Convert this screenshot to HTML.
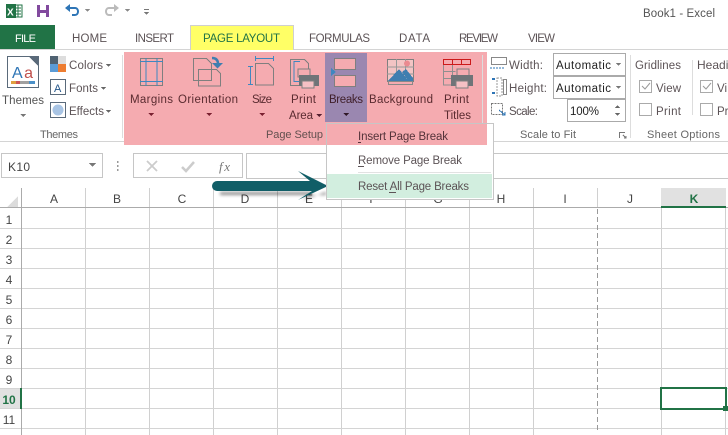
<!DOCTYPE html>
<html><head><meta charset="utf-8"><style>
html,body{margin:0;padding:0;background:#fff;width:728px;height:435px;overflow:hidden}
svg{display:block;position:absolute;left:0;top:0}
text{font-family:"Liberation Sans",sans-serif;font-size:11.500px;fill:#444}
.r{fill:#5c5356}.c{text-anchor:middle;font-size:12px;fill:#444}
</style></head><body>
<svg width="728" height="435" viewBox="0 0 728 435" xmlns="http://www.w3.org/2000/svg" shape-rendering="crispEdges">
<defs><filter id="b" x="-10%" y="-100%" width="120%" height="300%"><feGaussianBlur stdDeviation="1.500"/></filter></defs>
<rect width="728" height="435" fill="#fff"/>
<!-- QAT -->
<rect x="12" y="5" width="10" height="12" fill="#fff" stroke="#217346"/><path d="M15 8h6M15 11h6M15 14h6M18 5v12" stroke="#217346"/><rect x="6" y="4" width="10" height="14" fill="#217346"/><text x="7" y="15.500" style="font-size:10px;font-weight:bold;fill:#fff">X</text>
<rect x="37" y="5" width="12" height="12" fill="#824a9e"/><rect x="40" y="5" width="6" height="5" fill="#fff"/><rect x="40" y="13" width="6" height="4" fill="#fff"/>
<g shape-rendering="auto"><path d="M67 8h8c4 0 4 7 0 7h-3" fill="none" stroke="#2e75b6" stroke-width="2"/><path d="M65 8l5-4v8z" fill="#2e75b6"/>
<path d="M117 8h-8c-4 0-4 7 0 7h3" fill="none" stroke="#bbb" stroke-width="2"/><path d="M119 8l-5-4v8z" fill="#bbb"/></g>
<path d="M85 9h5l-2.500 3z M125 9h5l-2.500 3z" fill="#888"/><path d="M144 9h5v1h-5z M144 12h5l-2.500 3z" fill="#777"/>
<text x="643" y="17" textLength="72" style="fill:#555">Book1 - Excel</text>
<!-- tabs -->
<rect x="0" y="25" width="55" height="25" fill="#217346"/>
<text x="15" y="42" textLength="21" style="font-size:11px;fill:#fff">FILE</text>
<text x="72" y="42" textLength="35" class="r">HOME</text>
<text x="135" y="42" textLength="39" class="r">INSERT</text>
<rect x="190" y="25" width="104" height="25" fill="#ffff66"/><path d="M190.500 50V25.500H293.500V50" fill="none" stroke="#cfcfcf"/>
<text x="203" y="42" textLength="77" style="fill:#217346">PAGE LAYOUT</text>
<text x="309" y="42" textLength="61" class="r">FORMULAS</text>
<text x="399" y="42" textLength="31" class="r">DATA</text>
<text x="459" y="42" textLength="39" class="r">REVIEW</text>
<text x="528" y="42" textLength="27" class="r">VIEW</text>
<path d="M0 49.500H190M294 49.500H728" stroke="#d4d4d4"/>
<path d="M0 141.500H728" stroke="#d4d4d4"/>
<!-- themes -->
<rect x="7.500" y="56.500" width="31" height="31" fill="#fff" stroke="#5a6a7a"/><path d="M29 57h9v9z" fill="#5a6a7a"/><text x="12" y="78" style="font-size:16px;fill:#2e75b6" textLength="21">A<tspan style="font-size:16px;fill:#c0504d">a</tspan></text>
<rect x="11" y="81" width="24" height="3" fill="#a0a0a0"/><rect x="11" y="81" width="5" height="3" fill="#e0a040"/><rect x="16" y="81" width="4" height="3" fill="#c55"/><rect x="29" y="81" width="6" height="3" fill="#4a90c8"/>
<text x="2" y="104" textLength="42" style="fill:#555">Themes</text><path d="M20 114h6l-3 3z" fill="#777"/>
<rect x="50" y="56" width="16" height="16" fill="#4f6272"/><rect x="58" y="56" width="8" height="8" fill="#ddd"/><rect x="50" y="64" width="8" height="8" fill="#5b9bd5"/><rect x="58" y="64" width="8" height="8" fill="#ed7d31"/>
<text x="69" y="69" textLength="34" class="r">Colors</text><path d="M106 64h5l-2.500 3z" fill="#666"/>
<rect x="50.500" y="79.500" width="15" height="15" fill="#fff" stroke="#5a6a7a"/><text x="54" y="92" style="font-size:11px;fill:#24568a">A</text>
<text x="69" y="92" textLength="29" class="r">Fonts</text><path d="M101 87h5l-2.500 3z" fill="#666"/>
<rect x="50.500" y="102.500" width="15" height="15" fill="#fff" stroke="#5a6a7a"/><circle cx="58" cy="110" r="5.500" fill="#a8c4e4" shape-rendering="auto"/>
<text x="69" y="115" textLength="35" class="r">Effects</text><path d="M106 110h5l-2.500 3z" fill="#666"/>
<text x="40" y="138" textLength="38" style="font-size:11px;fill:#666">Themes</text>
<!-- page setup overlay -->
<rect x="124" y="52" width="363" height="93" fill="#f5abb0"/>
<rect x="325" y="53" width="42" height="69" fill="#9a87b0"/>
<path d="M122.500 55v83M482.500 55v83" stroke="#ddd"/>
<!-- margins -->
<rect x="140.500" y="58.500" width="22" height="27" fill="none" stroke="#7f7f7f"/>
<path d="M146 58v28M157 58v28M140 61.500h23M140 81.500h23" stroke="#3f87c0"/>
<text x="130" y="103" textLength="43" style="fill:#5a2b30">Margins</text><path d="M148 113h6l-3 3z" fill="#7a2030"/>
<!-- orientation -->
<path d="M193.500 58.500h13l5 5v17h-18zM198.500 69.500h18l4 4v12.500h-22z" fill="#f5abb0" stroke="#7f7f7f"/>
<g shape-rendering="auto"><path d="M212 58c4 0 6 2 6 6" fill="none" stroke="#3f7eb0" stroke-width="2.500"/><path d="M212 63h11l-5.500 5.500z" fill="#3f7eb0"/></g>
<text x="178" y="103" textLength="60" style="fill:#5a2b30">Orientation</text><path d="M206 113h6l-3 3z" fill="#7a2030"/>
<!-- size -->
<path d="M255 58.500h19M255.500 56v5M273.500 56v5M250.500 66v19M248 66.500h5M248 84.500h5" stroke="#3f87c0" fill="none"/>
<path d="M255.500 63.500h13l5 5v16.500h-18z" fill="none" stroke="#7f7f7f"/>
<text x="252" y="103" textLength="20" style="fill:#5a2b30">Size</text><path d="M259 113h6l-3 3z" fill="#7a2030"/>
<!-- print area -->
<path d="M290.500 59.500h14l4 4v22h-18z" fill="none" stroke="#7f7f7f"/><path d="M300 61.500h-6v20h6" fill="none" stroke="#3f87c0"/>
<rect x="298" y="69" width="12" height="8" fill="#f5abb0" stroke="#7f7f7f"/><rect x="299" y="75" width="20" height="11" fill="#6f7478"/><rect x="302" y="81" width="12" height="7" fill="#f5c0c4" stroke="#7f7f7f"/>
<text x="291" y="103" textLength="25" style="fill:#5a2b30">Print</text>
<text x="289" y="119" textLength="24" style="fill:#5a2b30">Area</text><path d="M316 114h6l-3 3z" fill="#552030"/>
<!-- breaks -->
<rect x="334.500" y="58.500" width="21" height="11" fill="#f5abb0" stroke="#7f7f7f"/><rect x="334.500" y="75.500" width="21" height="11" fill="#f5abb0" stroke="#7f7f7f"/>
<path d="M331 68l5 4-5 4z" fill="#3f87c0"/>
<text x="329" y="103" textLength="34" style="fill:#3f1f2a">Breaks</text><path d="M343 113h6l-3 3z" fill="#301828"/>
<!-- background -->
<rect x="387.500" y="59.500" width="26" height="22" fill="#f3c4c4" stroke="#7f7f7f"/><path d="M387 67h27M387 74h27M396.500 59v22M405.500 59v22" stroke="#999"/>
<path d="M388 81l11-12 10 12zM402 72l4-3 7 9v3h-4z" fill="#3f7eb0"/><circle cx="407" cy="63.500" r="3" fill="#ea8a90" shape-rendering="auto"/><rect x="388.500" y="81.500" width="24" height="3" fill="none" stroke="#888"/>
<text x="369" y="103" textLength="64" style="fill:#5a2b30">Background</text>
<!-- print titles -->
<rect x="443.500" y="59.500" width="27" height="5" fill="#f5abb0" stroke="#cc1a1a"/><path d="M452.500 59v5M461.500 59v5" stroke="#cc1a1a"/>
<path d="M443.500 65v20h12M443.500 71.500h12M443.500 78.500h12M452.500 65v20" fill="none" stroke="#8f8f8f"/>
<rect x="457" y="69" width="12" height="8" fill="#f5abb0" stroke="#7f7f7f"/><rect x="451" y="75" width="22" height="11" fill="#6f7478"/><rect x="456" y="81" width="12" height="7" fill="#f5c0c4" stroke="#7f7f7f"/>
<text x="444" y="103" textLength="25" style="fill:#5a2b30">Print</text>
<text x="444" y="119" textLength="27" style="fill:#5a2b30">Titles</text>
<text x="266" y="138" textLength="57" style="font-size:11px;fill:#62504f">Page Setup</text>
<!-- scale to fit -->
<path d="M491.500 57.500h15v7h-15z" fill="none" stroke="#888"/><path d="M490 68h15" stroke="#2e75b6" stroke-dasharray="2 1"/>
<rect x="497" y="78" width="5" height="18" fill="none" stroke="#999" stroke-dasharray="2 1"/><rect x="503.500" y="79.500" width="3" height="15" fill="none" stroke="#888"/><path d="M492 79h3M492 93h3" stroke="#2e75b6" stroke-width="2"/>
<rect x="491.500" y="103.500" width="11" height="11" fill="none" stroke="#777" stroke-dasharray="2 1"/><path d="M499 110l6 5M505 112v3h-3" stroke="#2e75b6" fill="none"/>
<text x="509" y="69" textLength="34" class="r">Width:</text>
<text x="509" y="92" textLength="38" class="r">Height:</text>
<text x="509" y="115" textLength="29" class="r">Scale:</text>
<rect x="553.500" y="53.500" width="72" height="22" fill="#fff" stroke="#aaa"/><rect x="553.500" y="76.500" width="72" height="22" fill="#fff" stroke="#aaa"/><rect x="567.500" y="99.500" width="58" height="22" fill="#fff" stroke="#aaa"/>
<text x="556" y="69" textLength="55" style="fill:#1f1f1f">Automatic</text><text x="556" y="92" textLength="55" style="fill:#1f1f1f">Automatic</text><text x="570" y="115" textLength="29" style="fill:#1f1f1f">100%</text>
<path d="M616 63h5l-2.500 3zM616 86h5l-2.500 3z" fill="#777"/><path d="M615 108l2.500-3 2.500 3zM615 113h5l-2.500 3z" fill="#666"/>
<text x="520" y="138" textLength="56" style="font-size:11px;fill:#666">Scale to Fit</text>
<path d="M619 132.500h6M619.500 132v6M623 135l3 3M626 136v2h-2" stroke="#777" fill="none"/>
<path d="M630.500 55v83M692.500 60v55" stroke="#ddd"/>
<!-- sheet options -->
<text x="635" y="69" textLength="46" class="r">Gridlines</text><text x="697" y="69" class="r" style="font-size:12px">Headings</text>
<rect x="639.500" y="80.500" width="12" height="12" fill="#fff" stroke="#aaa"/><path d="M642 86l3 3 5-6" fill="none" stroke="#999" shape-rendering="auto"/>
<rect x="639.500" y="103.500" width="12" height="12" fill="#fff" stroke="#aaa"/>
<text x="656" y="92" textLength="25" class="r">View</text><text x="656" y="115" textLength="25" class="r">Print</text>
<rect x="700.500" y="80.500" width="12" height="12" fill="#fff" stroke="#aaa"/><path d="M703 86l3 3 5-6" fill="none" stroke="#999" shape-rendering="auto"/>
<rect x="700.500" y="103.500" width="12" height="12" fill="#fff" stroke="#aaa"/>
<text x="717" y="92" class="r">Vi</text><text x="717" y="115" class="r">Pr</text>
<text x="647" y="138" textLength="73" style="font-size:11px;fill:#666">Sheet Options</text>
<!-- formula bar -->
<rect x="1.500" y="153.500" width="101" height="24" fill="#fff" stroke="#c6c6c6"/>
<text x="8" y="171" textLength="22" style="font-size:12px;fill:#444">K10</text><path d="M89 163h7l-3.500 4z" fill="#777"/>
<path d="M117.500 161v2M117.500 165v2M117.500 169v2" stroke="#999" stroke-width="1.500"/>
<rect x="133.500" y="153.500" width="109" height="24" fill="#fff" stroke="#c6c6c6"/>
<g shape-rendering="auto"><path d="M147 161l10 10M157 161l-10 10" stroke="#ccc" stroke-width="1.800"/><path d="M182 167l4 4 8-9" fill="none" stroke="#ccc" stroke-width="2.500"/></g>
<text x="219" y="171" style="font-family:'Liberation Serif',serif;font-style:italic;font-size:13px;fill:#777" textLength="11">fx</text>
<path d="M246.500 178V153.500H728M246 178.500H728" fill="none" stroke="#c6c6c6"/>
<!-- grid -->
<path d="M85.500 188v247M149.500 188v247M213.500 188v247M277.500 188v247M341.500 188v247M405.500 188v247M469.500 188v247M533.500 188v247M597.500 188v20M661.500 188v247M725.500 188v247" stroke="#d0d0d0"/>
<path d="M0 228.500H728M0 248.500H728M0 268.500H728M0 288.500H728M0 308.500H728M0 328.500H728M0 348.500H728M0 368.500H728M0 388.500H728M0 408.500H728M0 428.500H728" stroke="#d4d4d4"/>
<rect x="661" y="188" width="65" height="19" fill="#e1e1e1"/>
<path d="M7 207l11-11v11z" fill="#dcdcdc"/>
<path d="M21.500 188V435M0 207.500H728" stroke="#ababab"/>
<rect x="661" y="206" width="65" height="2" fill="#217346"/>
<rect x="0" y="389" width="20" height="19" fill="#e1e1e1"/><rect x="20" y="388" width="2" height="21" fill="#217346"/>
<path d="M597.500 209V433" stroke="#999" stroke-dasharray="5 3"/>
<rect x="661" y="388" width="65" height="21" fill="#fff" stroke="#217346" stroke-width="2"/><rect x="723" y="406" width="5" height="5" fill="#217346"/>
<text class="c" x="54" y="203">A</text><text class="c" x="117" y="203">B</text><text class="c" x="182" y="203">C</text><text class="c" x="245" y="203">D</text><text class="c" x="309" y="203">E</text><text class="c" x="373" y="203">F</text><text class="c" x="438" y="203">G</text><text class="c" x="501" y="203">H</text><text class="c" x="565" y="203">I</text><text class="c" x="630" y="203">J</text>
<text class="c" x="694" y="203" style="fill:#217346;font-weight:bold">K</text>
<text class="c" x="9" y="224">1</text><text class="c" x="9" y="244">2</text><text class="c" x="9" y="264">3</text><text class="c" x="9" y="284">4</text><text class="c" x="9" y="304">5</text><text class="c" x="9" y="324">6</text><text class="c" x="9" y="344">7</text><text class="c" x="9" y="364">8</text><text class="c" x="9" y="384">9</text>
<text class="c" x="9" y="404" style="fill:#217346;font-weight:bold">10</text><text class="c" x="9" y="424">11</text>
<!-- arrow -->
<g shape-rendering="auto">
<path d="M219 189H312L302 197L325 189V192H219z" fill="#000" opacity=".45" filter="url(#b)" transform="translate(1,3)"/>
<path d="M217 181H310L298 171L328 186L298 200L312 191H217a5 5 0 0 1 0-10z" fill="#115e67"/>
</g>
<!-- menu -->
<rect x="326.500" y="123.500" width="167" height="76" fill="#fff" stroke="#c6c6c6"/>
<rect x="327" y="124" width="160" height="21" fill="#f5abb0"/>
<path d="M358 172.500H491" stroke="#e2e2e2"/>
<rect x="327" y="174" width="165" height="24" fill="#d2eedf"/>
<text x="358" y="140" textLength="90" style="fill:#54333a">Insert Page Break</text><path d="M358 142.500h3" stroke="#54333a"/>
<text x="358" y="164" textLength="104" class="r">Remove Page Break</text><path d="M358 166.500h6" stroke="#5c5356"/>
<text x="358" y="190" textLength="111" class="r">Reset All Page Breaks</text><path d="M389 192.500h7" stroke="#5c5356"/>
</svg>
</body></html>
